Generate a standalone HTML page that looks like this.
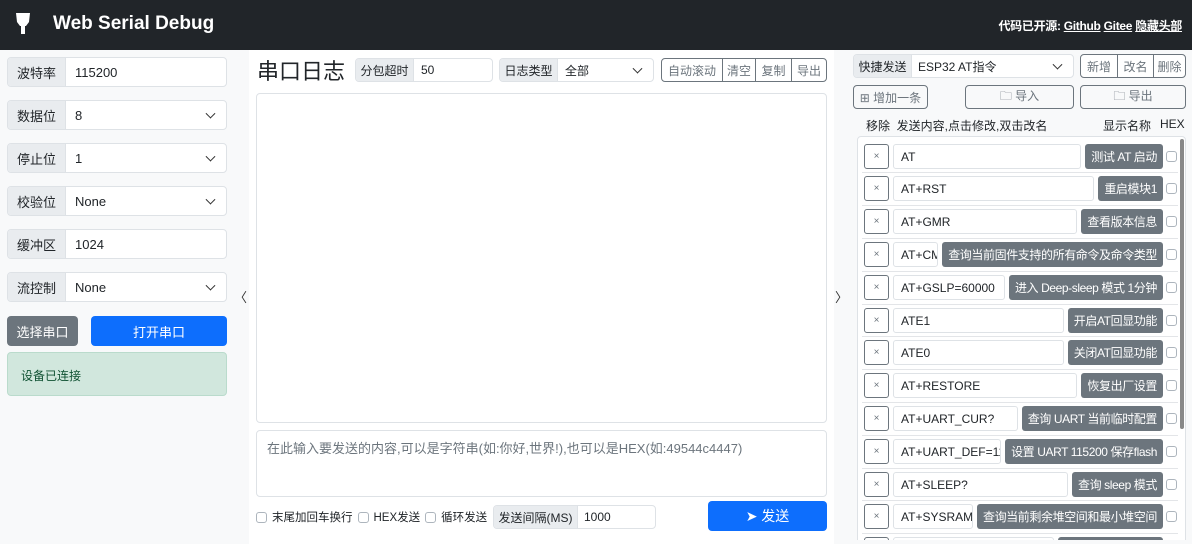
<!DOCTYPE html>
<html><head><meta charset="utf-8"><style>
*{box-sizing:border-box;margin:0;padding:0}
html{width:1192px;height:544px;overflow:hidden}
body{width:1192px;height:544px;overflow:hidden;background:#f8f9fa;font-family:"Liberation Sans","Noto Sans CJK SC",sans-serif;color:#212529;font-size:13px;position:relative}
.abs{position:absolute}
.hdr{left:0;top:0;width:1192px;height:50px;background:#212529;color:#fff}
.ig{position:absolute;display:flex;border:1px solid #dee2e6;border-radius:4px;background:#fff;overflow:hidden;align-items:stretch}
.ig .l{background:#e9ecef;border-right:1px solid #dee2e6;display:flex;align-items:center;justify-content:center;color:#212529;white-space:nowrap}
.ig .v{flex:1;display:flex;align-items:center;padding-left:9px;position:relative}
.chev{position:absolute;right:12px;top:50%;width:7px;height:7px;border-right:1.5px solid #333;border-bottom:1.5px solid #333;transform:translateY(-70%) rotate(45deg)}
.btn{position:absolute;display:flex;align-items:center;justify-content:center;border-radius:4px}
.bg{position:absolute;display:flex;border:1px solid #6c757d;border-radius:4px;overflow:hidden;background:#fff}
.bg div{display:flex;align-items:center;justify-content:center;color:#6c757d;border-left:1px solid #6c757d;font-size:12px}
.bg div:first-child{border-left:none}
.row{position:absolute;left:864px;width:313px;height:25px;display:flex;align-items:center}
.x{flex:none;width:25px;height:25px;border:1px solid #6c757d;border-radius:3px;color:#6c757d;display:flex;align-items:center;justify-content:center;font-size:10px;background:#fff}
.in{flex:1;min-width:0;overflow:hidden;white-space:nowrap;height:25px;border:1px solid #dee2e6;border-radius:3px;margin-left:4px;display:flex;align-items:center;padding-left:7px;background:#fff;font-size:12px}
.lb{flex:none;height:25px;background:#6c757d;color:#fff;border-radius:3px;margin-left:4px;display:flex;align-items:center;padding:0 6px;font-size:12px;white-space:nowrap;letter-spacing:-0.4px}
.cb{flex:none;width:11px;height:11px;border:1px solid #adb5bd;border-radius:3px;margin-left:3px;background:#fff}
.sep{position:absolute;left:862px;width:316px;height:1px;background:#e3e5e8}
</style></head><body>
<div class="abs hdr">
<svg class="abs" style="left:15px;top:13px" width="16" height="24" viewBox="0 0 16 24"><path d="M1 0h14l-1 9-3 4H5L2 9z M6 13h4v8h-4z" fill="#fff"/></svg>
<div class="abs" style="left:53px;top:13px;font-size:19px;font-weight:bold">Web Serial Debug</div>
<div class="abs" style="right:10px;top:17px;font-size:12px;font-weight:bold;white-space:nowrap;letter-spacing:-0.3px">代码已开源: <u>Github</u> <u>Gitee</u> <u>隐藏头部</u></div>
</div>

<div class="ig" style="left:7px;top:57px;width:220px;height:30px"><div class="l" style="width:58px">波特率</div><div class="v">115200</div></div>
<div class="ig" style="left:7px;top:100px;width:220px;height:30px"><div class="l" style="width:58px">数据位</div><div class="v">8<span class="chev"></span></div></div>
<div class="ig" style="left:7px;top:143px;width:220px;height:30px"><div class="l" style="width:58px">停止位</div><div class="v">1<span class="chev"></span></div></div>
<div class="ig" style="left:7px;top:186px;width:220px;height:30px"><div class="l" style="width:58px">校验位</div><div class="v">None<span class="chev"></span></div></div>
<div class="ig" style="left:7px;top:229px;width:220px;height:30px"><div class="l" style="width:58px">缓冲区</div><div class="v">1024</div></div>
<div class="ig" style="left:7px;top:272px;width:220px;height:30px"><div class="l" style="width:58px">流控制</div><div class="v">None<span class="chev"></span></div></div>
<div class="btn" style="left:7px;top:316px;width:71px;height:30px;background:#6c757d;color:#fff">选择串口</div>
<div class="btn" style="left:91px;top:316px;width:136px;height:30px;background:#0d6efd;color:#fff">打开串口</div>
<div class="abs" style="left:7px;top:352px;width:220px;height:44px;background:#d1e7dd;border:1px solid #badbcc;border-radius:4px;color:#0f5132;font-size:12px;padding:14px 0 0 13px">设备已连接</div>
<div class="abs" style="left:234px;top:287px;font-size:13px;color:#333">〈</div>

<div class="abs" style="left:249px;top:50px;width:585px;height:494px;background:#fff"></div>
<div class="abs" style="left:257px;top:54px;font-size:22px">串口日志</div>
<div class="ig" style="left:355px;top:58px;width:138px;height:24px;font-size:12px"><div class="l" style="width:58px">分包超时</div><div class="v" style="padding-left:7px">50</div></div>
<div class="ig" style="left:499px;top:58px;width:155px;height:24px;font-size:12px"><div class="l" style="width:58px">日志类型</div><div class="v" style="padding-left:7px">全部<span class="chev"></span></div></div>
<div class="bg" style="left:661px;top:58px;width:166px;height:24px"><div style="width:60px">自动滚动</div><div style="width:33px">清空</div><div style="width:36px">复制</div><div style="flex:1">导出</div></div>
<div class="abs" style="left:256px;top:93px;width:571px;height:330px;border:1px solid #dee2e6;border-radius:4px"></div>
<div class="abs" style="left:256px;top:430px;width:571px;height:67px;border:1px solid #dee2e6;border-radius:4px;color:#6c757d;padding:7px 10px">在此输入要发送的内容,可以是字符串(如:你好,世界!),也可以是HEX(如:49544c4447)</div>
<div class="abs" style="left:256px;top:509px;font-size:11.5px;display:flex;align-items:center;white-space:nowrap"><span class="cb" style="margin:0 5px 0 0"></span>末尾加回车换行<span class="cb" style="margin:0 5px 0 5px"></span>HEX发送<span class="cb" style="margin:0 5px 0 5px"></span>循环发送</div>
<div class="ig" style="left:493px;top:505px;width:163px;height:24px;font-size:12px"><div class="l" style="width:84px">发送间隔(MS)</div><div class="v" style="padding-left:6px">1000</div></div>
<div class="btn" style="left:708px;top:501px;width:119px;height:30px;background:#0d6efd;color:#fff;font-size:14px">➤ 发送</div>
<div class="abs" style="left:835px;top:287px;font-size:13px;color:#333">〉</div>

<div class="ig" style="left:853px;top:54px;width:221px;height:24px;font-size:12px"><div class="l" style="width:58px">快捷发送</div><div class="v" style="padding-left:6px">ESP32 AT指令<span class="chev"></span></div></div>
<div class="bg" style="left:1080px;top:54px;width:106px;height:24px"><div style="width:36px">新增</div><div style="width:36px">改名</div><div style="flex:1">删除</div></div>
<div class="btn" style="left:853px;top:85px;width:75px;height:24px;border:1px solid #6c757d;color:#6c757d;font-size:12px">⊞ 增加一条</div>
<div class="btn" style="left:965px;top:85px;width:109px;height:24px;border:1px solid #6c757d;color:#6c757d;font-size:12px">🗀 导入</div>
<div class="btn" style="left:1080px;top:85px;width:106px;height:24px;border:1px solid #6c757d;color:#6c757d;font-size:12px">🗀 导出</div>
<div class="abs" style="left:866px;top:117px;font-size:12px">移除 &nbsp;发送内容,点击修改,双击改名</div>
<div class="abs" style="left:1103px;top:117px;font-size:12px">显示名称</div>
<div class="abs" style="left:1160px;top:117px;font-size:12px">HEX</div>
<div class="abs" style="left:857px;top:136px;width:329px;height:412px;border:1px solid #dee2e6;border-radius:4px;background:#fff"></div>
<div class="abs" style="left:1180px;top:139px;width:4px;height:290px;background:#888;border-radius:2px"></div>

<div class="row" style="top:144px"><div class="x">×</div><div class="in">AT</div><div class="lb">测试 AT 启动</div><div class="cb"></div></div>
<div class="sep" style="top:172px"></div>
<div class="row" style="top:176px"><div class="x">×</div><div class="in">AT+RST</div><div class="lb">重启模块1</div><div class="cb"></div></div>
<div class="sep" style="top:205px"></div>
<div class="row" style="top:209px"><div class="x">×</div><div class="in">AT+GMR</div><div class="lb">查看版本信息</div><div class="cb"></div></div>
<div class="sep" style="top:238px"></div>
<div class="row" style="top:242px"><div class="x">×</div><div class="in">AT+CM</div><div class="lb">查询当前固件支持的所有命令及命令类型</div><div class="cb"></div></div>
<div class="sep" style="top:271px"></div>
<div class="row" style="top:275px"><div class="x">×</div><div class="in">AT+GSLP=60000</div><div class="lb">进入 Deep-sleep 模式 1分钟</div><div class="cb"></div></div>
<div class="sep" style="top:304px"></div>
<div class="row" style="top:308px"><div class="x">×</div><div class="in">ATE1</div><div class="lb">开启AT回显功能</div><div class="cb"></div></div>
<div class="sep" style="top:336px"></div>
<div class="row" style="top:340px"><div class="x">×</div><div class="in">ATE0</div><div class="lb">关闭AT回显功能</div><div class="cb"></div></div>
<div class="sep" style="top:369px"></div>
<div class="row" style="top:373px"><div class="x">×</div><div class="in">AT+RESTORE</div><div class="lb">恢复出厂设置</div><div class="cb"></div></div>
<div class="sep" style="top:402px"></div>
<div class="row" style="top:406px"><div class="x">×</div><div class="in">AT+UART_CUR?</div><div class="lb">查询 UART 当前临时配置</div><div class="cb"></div></div>
<div class="sep" style="top:435px"></div>
<div class="row" style="top:439px"><div class="x">×</div><div class="in">AT+UART_DEF=11</div><div class="lb">设置 UART 115200 保存flash</div><div class="cb"></div></div>
<div class="sep" style="top:468px"></div>
<div class="row" style="top:472px"><div class="x">×</div><div class="in">AT+SLEEP?</div><div class="lb">查询 sleep 模式</div><div class="cb"></div></div>
<div class="sep" style="top:500px"></div>
<div class="row" style="top:504px"><div class="x">×</div><div class="in">AT+SYSRAM?</div><div class="lb">查询当前剩余堆空间和最小堆空间</div><div class="cb"></div></div>
<div class="sep" style="top:533px"></div>
<div class="row" style="top:537px"><div class="x">×</div><div class="in"></div><div class="lb" style="width:105px"></div><div class="cb"></div></div>
<div class="abs" style="left:0;top:540px;width:1192px;height:4px;background:#f8f9fa"></div>
<div class="abs" style="left:249px;top:540px;width:585px;height:4px;background:#fff"></div>
</body></html>
